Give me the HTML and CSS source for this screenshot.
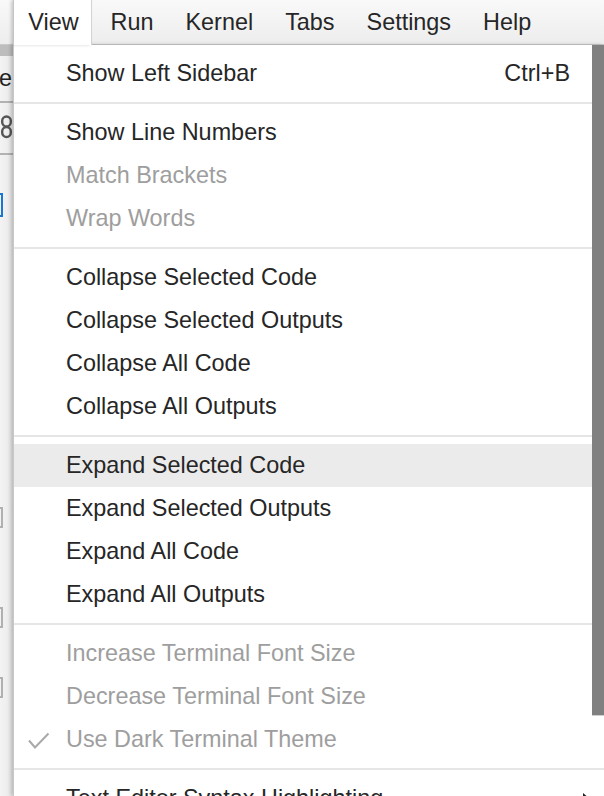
FILE: index.html
```html
<!DOCTYPE html>
<html>
<head>
<meta charset="utf-8">
<link rel="stylesheet" href="styles.css">
</head>
<body>
<div class="app">
  <div class="menubar">
    <div class="mb-lead"></div>
    <div class="mb-item active">View</div>
    <div class="mb-item">Run</div>
    <div class="mb-item">Kernel</div>
    <div class="mb-item">Tabs</div>
    <div class="mb-item">Settings</div>
    <div class="mb-item">Help</div>
  </div>
  <div class="main">
    <div class="side">
      <div class="side-band"></div>
      <div class="side-text">e</div>
      <div class="side-line"></div>
      <div class="side-icon">
        <svg width="13" height="26" viewBox="0 0 13 26">
          <rect x="2.2" y="1.5" width="8.6" height="10" rx="4.3" fill="none" stroke="#555" stroke-width="2.4"/>
          <rect x="2.2" y="12" width="8.6" height="10" rx="4.3" fill="none" stroke="#555" stroke-width="2.4"/>
        </svg>
      </div>
      <div class="side-line"></div>
      <div class="side-box blue"></div>
      <div class="side-box gray b1"></div>
      <div class="side-box gray b2"></div>
      <div class="side-box gray b3"></div>
    </div>
    <div class="menu">
      <div class="item"><span class="ico"></span><span class="label">Show Left Sidebar</span><span class="shortcut">Ctrl+B</span></div>
      <div class="sep"></div>
      <div class="item"><span class="ico"></span><span class="label">Show Line Numbers</span></div>
      <div class="item disabled"><span class="ico"></span><span class="label">Match Brackets</span></div>
      <div class="item disabled"><span class="ico"></span><span class="label">Wrap Words</span></div>
      <div class="sep"></div>
      <div class="item"><span class="ico"></span><span class="label">Collapse Selected Code</span></div>
      <div class="item"><span class="ico"></span><span class="label">Collapse Selected Outputs</span></div>
      <div class="item"><span class="ico"></span><span class="label">Collapse All Code</span></div>
      <div class="item"><span class="ico"></span><span class="label">Collapse All Outputs</span></div>
      <div class="sep"></div>
      <div class="item hover"><span class="ico"></span><span class="label">Expand Selected Code</span></div>
      <div class="item"><span class="ico"></span><span class="label">Expand Selected Outputs</span></div>
      <div class="item"><span class="ico"></span><span class="label">Expand All Code</span></div>
      <div class="item"><span class="ico"></span><span class="label">Expand All Outputs</span></div>
      <div class="sep"></div>
      <div class="item disabled"><span class="ico"></span><span class="label">Increase Terminal Font Size</span></div>
      <div class="item disabled"><span class="ico"></span><span class="label">Decrease Terminal Font Size</span></div>
      <div class="item disabled"><span class="ico">
        <svg width="22" height="18" viewBox="0 0 22 18"><path d="M1 8.5 L7 15.5 L20.5 1.5" fill="none" stroke="#a9a9a9" stroke-width="2"/></svg>
      </span><span class="label">Use Dark Terminal Theme</span></div>
      <div class="sep"></div>
      <div class="item"><span class="ico"></span><span class="label">Text Editor Syntax Highlighting</span><span class="submenu"></span></div>
    </div>
  </div>
  <div class="scroll-thumb"></div>
</div>
</body>
</html>
```

FILE: styles.css
```css
html, body {
  margin: 0;
  padding: 0;
}
body {
  width: 604px;
  height: 796px;
  overflow: hidden;
  background: #fff;
  font-family: "Liberation Sans", Arial, sans-serif;
  font-size: 23.4px;
  color: #262626;
}
.app {
  position: relative;
  width: 604px;
  height: 796px;
  overflow: hidden;
}
.menubar {
  display: flex;
  height: 45px;
  box-sizing: border-box;
  border-bottom: 1px solid #c9c9c9;
  background: linear-gradient(#f9f9f9, #ededed);
}
.mb-lead {
  width: 13px;
  flex: none;
}
.mb-item {
  height: 44px;
  line-height: 45px;
  padding: 0 16px;
  color: #262626;
  white-space: nowrap;
}
.mb-item.active {
  position: relative;
  z-index: 2;
  height: 45px;
  padding: 0 12px 0 14.3px;
  background: #fff;
  border-left: 1px solid #c4c4c4;
  border-right: 1px solid #d4d4d4;
  box-shadow: -2px 0 3px rgba(0, 0, 0, 0.18);
}
.mb-item.active + .mb-item {
  margin-left: 3px;
}
.main {
  display: flex;
  height: 751px;
}
.side {
  width: 13px;
  flex: none;
  display: flex;
  flex-direction: column;
  background: linear-gradient(to right, #f3f3f3, #e9e9e9);
  overflow: hidden;
}
.side-band {
  height: 11px;
  background: #bdbdbd;
}
.side-text {
  height: 45px;
  line-height: 45px;
  margin-left: -1px;
  color: #222;
}
.side-line {
  height: 2px;
  background: #b3b3b3;
  flex: none;
}
.side-icon {
  height: 50px;
  display: flex;
  align-items: flex-start;
  padding-top: 12px;
  box-sizing: border-box;
}
.side-box {
  width: 3px;
  box-sizing: border-box;
  flex: none;
}
.side-box.blue {
  margin-top: 38px;
  height: 24px;
  border: 2px solid #1976d2;
  border-left: none;
}
.side-box.gray {
  height: 21px;
  border: 2px solid #b0b0b0;
  border-left: none;
}
.side-box.b1 { margin-top: 290px; }
.side-box.b2 { margin-top: 79px; }
.side-box.b3 { margin-top: 49px; }
.menu {
  flex: 1;
  position: relative;
  z-index: 1;
  background: #fff;
  border-left: 1px solid #c8c8c8;
  box-shadow: -2px 0 4px rgba(0, 0, 0, 0.22);
  padding-top: 7px;
}
.item {
  display: flex;
  align-items: center;
  height: 43px;
  padding: 0 34px 0 14px;
  white-space: nowrap;
}
.item.hover {
  background: #ebebeb;
}
.item.disabled {
  color: #9e9e9e;
}
.ico {
  width: 38px;
  flex: none;
  display: flex;
  align-items: center;
}
.ico svg {
  display: block;
  margin-top: 2px;
}
.label {
  flex: 1;
}
.shortcut {
  margin-left: auto;
}
.submenu {
  margin-right: -20px;
  width: 0;
  height: 0;
  border-top: 6px solid transparent;
  border-bottom: 6px solid transparent;
  border-left: 7px solid #222;
}
.sep {
  height: 2px;
  margin: 7px 0;
  background: #e6e6e6;
}
.scroll-thumb {
  position: absolute;
  left: 592px;
  top: 45px;
  width: 12px;
  height: 670px;
  background: #808080;
  border-bottom: 1px solid #d0d0d0;
  z-index: 3;
}
```
